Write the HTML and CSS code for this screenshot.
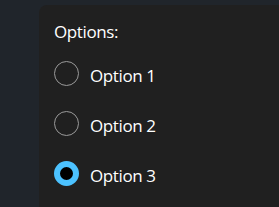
FILE: index.html
```html
<!DOCTYPE html>
<html lang="en">
<head>
    <meta charset="UTF-8">
    <title>Options</title>
    <link rel="stylesheet" href="styles.css">
</head>
<body>
    <div class="panel">
        <div class="group-title">Options:</div>
        <label class="option">
            <input type="radio" name="opt">
            <span class="radio"></span>
            <span class="option-text">Option 1</span>
        </label>
        <label class="option">
            <input type="radio" name="opt">
            <span class="radio"></span>
            <span class="option-text">Option 2</span>
        </label>
        <label class="option">
            <input type="radio" name="opt" checked>
            <span class="radio"></span>
            <span class="option-text">Option 3</span>
        </label>
    </div>
</body>
</html>
```

FILE: styles.css
```css
html, body {
    height: 100%;
}
body {
    margin: 0;
    background-color: #20252b;
    font-family: "Open Sans", "Noto Sans", sans-serif;
    color: #ffffff;
    overflow: hidden;
}
.panel {
    margin-left: 39px;
    margin-top: 5px;
    height: 100%;
    background-color: #202020;
    border-top-left-radius: 8px;
    padding: 15px 0 0 15px;
    box-sizing: border-box;
}
.group-title {
    font-size: 17px;
    letter-spacing: -0.4px;
    line-height: 24px;
    height: 28.5px;
}
.option {
    display: flex;
    align-items: center;
    height: 50px;
    cursor: pointer;
}
.option input {
    display: none;
}
.radio {
    width: 25px;
    height: 25px;
    box-sizing: border-box;
    border: 1.5px solid #9a9a9a;
    border-radius: 50%;
    margin-right: 11px;
    flex-shrink: 0;
}
.option input:checked + .radio {
    border: 6px solid #4cc2ff;
    background-color: #000000;
}
.option-text {
    font-size: 17px;
    letter-spacing: -0.4px;
    padding-top: 4px;
}
```
